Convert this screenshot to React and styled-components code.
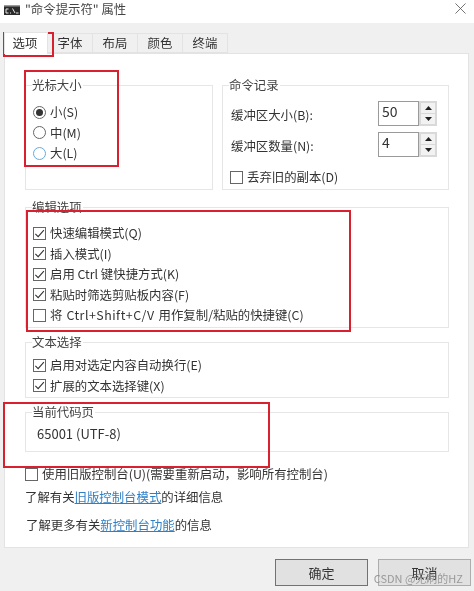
import React from "react"
import styled, { createGlobalStyle } from "styled-components"

const GlobalStyle = createGlobalStyle`
  html, body {
    margin: 0;
    padding: 0;
    background: #f0f0f0;
  }
  * {
    box-sizing: border-box;
  }
`

const WideLatin = styled.span`
    letter-spacing: 0.5px;
`

const tabs = ["选项", "字体", "布局", "颜色", "终端"]

const editOptions = [
    { label: "快速编辑模式(Q)", checked: true },
    { label: "插入模式(I)", checked: true },
    { label: "启用 Ctrl 键快捷方式(K)", checked: true },
    { label: "粘贴时筛选剪贴板内容(F)", checked: true },
    { label: <>将 <WideLatin>Ctrl+Shift+C/V</WideLatin> 用作复制/粘贴的快捷键(C)</>, checked: false },
]

function Radio({ selected, focused, children }) {
    return (
        <OptionRow>
            <RadioMark $focused={focused}>{selected && <RadioDot />}</RadioMark>
            {children}
        </OptionRow>
    )
}

function Check({ checked, children }) {
    return (
        <OptionRow>
            <CheckMark>
                {checked && (
                    <svg width="11" height="11" viewBox="0 0 12 12">
                        <path d="M1.5 6.5 L4.5 9.5 L10.8 2.2" fill="none" stroke="#333" strokeWidth="1.2" />
                    </svg>
                )}
            </CheckMark>
            {children}
        </OptionRow>
    )
}

function Spinner({ value }) {
    return (
        <SpinBox>
            <SpinInput>{value}</SpinInput>
            <SpinArrows>
                <SpinButton>
                    <svg width="7" height="4" viewBox="0 0 7 4"><path d="M3.5 0 L7 4 L0 4 Z" fill="#222" /></svg>
                </SpinButton>
                <SpinButton>
                    <svg width="7" height="4" viewBox="0 0 7 4"><path d="M0 0 L7 0 L3.5 4 Z" fill="#222" /></svg>
                </SpinButton>
            </SpinArrows>
        </SpinBox>
    )
}

export default function App() {
    return (
        <Window>
            <GlobalStyle />
            <TitleBar>
                <TitleIcon>
                    <svg width="16" height="10" viewBox="0 0 16 10">
                        <rect width="16" height="10" fill="#2b2b2b" />
                        <rect width="16" height="1.5" fill="#9a9a9a" />
                        <path d="M2 4h2.5M2 4v4h2.5M6 8h1M8.5 3.5l2.5 4.5M12 8h2.5" fill="none" stroke="#e8e8e8" strokeWidth="1" />
                    </svg>
                </TitleIcon>
                <TitleText>"命令提示符" 属性</TitleText>
                <CloseIcon>
                    <svg width="11" height="11" viewBox="0 0 12 12">
                        <path d="M0.5 0.5 L11.5 11.5 M11.5 0.5 L0.5 11.5" stroke="#555" strokeWidth="0.9" />
                    </svg>
                </CloseIcon>
            </TitleBar>

            <TabStrip>
                {tabs.map((t, index) => (
                    <Tab key={t} $active={index === 0}>{t}</Tab>
                ))}
            </TabStrip>

            <Panel>
                <TopRow>
                    <Group $height="105px">
                        <Legend>光标大小</Legend>
                        <OptionList>
                            <Radio selected>小(S)</Radio>
                            <Radio>中(M)</Radio>
                            <Radio focused>大(L)</Radio>
                        </OptionList>
                    </Group>
                    <Group $height="105px">
                        <Legend>命令记录</Legend>
                        <HistoryBody>
                            <SpinRow><SpinLabel>缓冲区大小(B):</SpinLabel><Spinner value="50" /></SpinRow>
                            <SpinRow><SpinLabel>缓冲区数量(N):</SpinLabel><Spinner value="4" /></SpinRow>
                            <Check>丢弃旧的副本(D)</Check>
                        </HistoryBody>
                    </Group>
                </TopRow>

                <Group $height="121px">
                    <Legend>编辑选项</Legend>
                    <EditOptions>
                        {editOptions.map((o, index) => (
                            <Check key={index} checked={o.checked}>{o.label}</Check>
                        ))}
                    </EditOptions>
                </Group>

                <Group $height="56px">
                    <Legend>文本选择</Legend>
                    <TextOptions>
                        <Check checked>启用对选定内容自动换行(E)</Check>
                        <Check checked>扩展的文本选择键(X)</Check>
                    </TextOptions>
                </Group>

                <Group $height="40px">
                    <Legend>当前代码页</Legend>
                    <CodePage>65001 (UTF-8)</CodePage>
                </Group>

                <LegacyRow>
                    <Check>使用旧版控制台(U)(需要重新启动，影响所有控制台)</Check>
                </LegacyRow>
                <InfoLine>了解有关<InfoLink>旧版控制台模式</InfoLink>的详细信息</InfoLine>
                <InfoLine $second>了解更多有关<InfoLink>新控制台功能</InfoLink>的信息</InfoLine>
            </Panel>

            <Footer>
                <FooterButton $primary>确定</FooterButton>
                <FooterButton>取消</FooterButton>
            </Footer>

            <RedBox $x={3} $y={32} $w={51} $h={25} />
            <RedBox $x={24} $y={70} $w={95} $h={97} />
            <RedBox $x={26} $y={210} $w={325} $h={122} />
            <RedBox $x={3} $y={402} $w={267} $h={66} />
            <Watermark>CSDN @无刷的HZ</Watermark>
        </Window>
    )
}

const Window = styled.div`
    position: relative;
    display: flex;
    flex-direction: column;
    width: 474px;
    height: 591px;
    overflow: hidden;
    background: #f0f0f0;
    color: #333333;
    font-family: "Noto Sans CJK SC", "Noto Sans", sans-serif;
    font-size: 12.4px;
    line-height: 18px;
    filter: blur(0.35px);
`

const TitleBar = styled.header`
    display: flex;
    align-items: center;
    height: 23px;
    padding: 0 7px 6px 4px;
    background: #ffffff;
`

const TitleIcon = styled.span`
    display: flex;
    width: 16px;
    height: 10px;
    margin: 2px 5px 0 0;
`

const TitleText = styled.span`
    flex: 1;
    color: #444444;
`

const CloseIcon = styled.span`
    display: flex;
    margin-right: 1px;
`

const TabStrip = styled.nav`
    display: flex;
    align-items: flex-end;
    height: 30px;
    padding-left: 4px;
`

const Tab = styled.div`
    width: ${(props) => (props.$active ? "44px" : "45px")};
    height: ${(props) => (props.$active ? "22px" : "20px")};
    margin-bottom: ${(props) => (props.$active ? "-1px" : "0")};
    padding: ${(props) => (props.$active ? "1px 2px 0 0" : "0")};
    text-align: center;
    line-height: 18px;
    border: 1px solid #e3e3e3;
    border-bottom: ${(props) => (props.$active ? "none" : "1px solid #e3e3e3")};
    border-left: ${(props) => (props.$active ? "1px solid #e3e3e3" : "none")};
    background: ${(props) => (props.$active ? "#ffffff" : "#f0f0f0")};
    position: relative;
    z-index: ${(props) => (props.$active ? 1 : 0)};
`

const Panel = styled.main`
    display: flex;
    flex-direction: column;
    gap: 14px;
    height: 495px;
    margin: 0 5px 0 4px;
    padding: 31px 19px 0 20px;
    background: #ffffff;
    border: 1px solid #e3e3e3;
`

const TopRow = styled.div`
    display: grid;
    grid-template-columns: 188px 1fr;
    gap: 9px;
    margin-bottom: 3px;
`

const Group = styled.section`
    position: relative;
    height: ${(props) => props.$height};
    border: 1px solid #e6e6e6;
`

const Legend = styled.span`
    position: absolute;
    top: -10px;
    left: 6px;
    padding-right: 1px;
    background: #ffffff;
    color: #444444;
`

const OptionList = styled.div`
    display: flex;
    flex-direction: column;
    gap: 2.6px;
    padding: 17px 0 0 7px;
`

const EditOptions = styled(OptionList)`
    padding-top: 16px;
`

const TextOptions = styled(OptionList)`
    padding-top: 13px;
`

const OptionRow = styled.label`
    display: flex;
    align-items: center;
    gap: 4px;
    height: 18px;
`

const RadioMark = styled.span`
    display: flex;
    align-items: center;
    justify-content: center;
    width: 13px;
    height: 13px;
    border-radius: 50%;
    border: 1px solid ${(props) => (props.$focused ? "#6aa9d8" : "#666666")};
`

const RadioDot = styled.span`
    width: 7px;
    height: 7px;
    border-radius: 50%;
    background: #333333;
`

const CheckMark = styled.span`
    display: flex;
    align-items: center;
    justify-content: center;
    width: 13px;
    height: 13px;
    border: 1px solid #666666;
`

const HistoryBody = styled.div`
    display: flex;
    flex-direction: column;
    gap: 6px;
    padding: 15px 11px 0 7px;
    label {
        margin-top: 5px;
    }
`

const SpinRow = styled.div`
    display: flex;
    align-items: center;
    justify-content: space-between;
    height: 25px;
`

const SpinLabel = styled.span`
    margin: 2px 0 0 1px;
`

const SpinBox = styled.div`
    display: flex;
    height: 25px;
`

const SpinInput = styled.div`
    width: 41px;
    height: 25px;
    padding: 0 0 0 3px;
    font-size: 14px;
    line-height: 18px;
    border: 1px solid #9a9a9a;
`

const SpinArrows = styled.div`
    display: flex;
    flex-direction: column;
    gap: 1px;
    width: 18px;
    padding: 2px 2px;
    background: #d9d9d9;
`

const SpinButton = styled.span`
    flex: 1;
    display: flex;
    align-items: center;
    justify-content: center;
    background: #f2f2f2;
`

const CodePage = styled.div`
    padding: 12px 0 0 11px;
    font-size: 13px;
`

const LegacyRow = styled.div`
    margin-top: -1px;
`

const InfoLine = styled.p`
    margin: ${(props) => (props.$second ? "-4px 0 0 1px" : "-9px 0 0")};
`

const InfoLink = styled.span`
    color: #2f7fc4;
    text-decoration: underline;
`

const Footer = styled.footer`
    display: flex;
    justify-content: flex-end;
    gap: 10px;
    padding: 11px 3px 0 0;
`

const FooterButton = styled.div`
    display: flex;
    align-items: center;
    justify-content: center;
    width: 93px;
    height: 27px;
    font-size: 13px;
    background: #e1e1e1;
    border: ${(props) => (props.$primary ? "1px solid #3a80bd" : "1px solid #adadad")};
`

const RedBox = styled.div`
    position: absolute;
    left: ${(props) => props.$x}px;
    top: ${(props) => props.$y}px;
    width: ${(props) => props.$w}px;
    height: ${(props) => props.$h}px;
    border: 2px solid #d9202f;
    pointer-events: none;
`

const Watermark = styled.span`
    position: absolute;
    right: 11px;
    bottom: 6px;
    font-size: 11px;
    line-height: 14px;
    color: #8d8d8d;
    opacity: 0.85;
`
